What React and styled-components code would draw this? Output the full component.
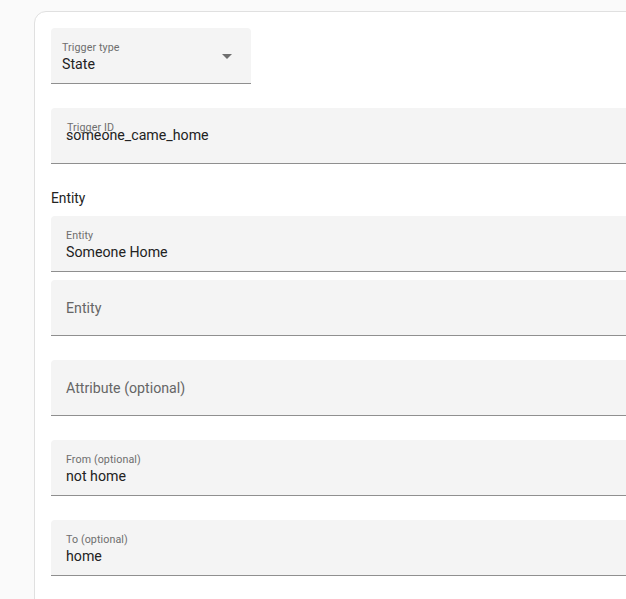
import React from 'react';
import styled, { createGlobalStyle } from 'styled-components';

const Global = createGlobalStyle`
  html, body {
    margin: 0;
    background: #fafafa;
    overflow: hidden;
    font-family: Roboto, "Noto Sans", sans-serif;
  }
`;

const Page = styled.div`
  padding: 11px 0 0 34px;
`;

const Card = styled.div`
  width: 700px;
  min-height: 620px;
  box-sizing: border-box;
  background: #fff;
  border: 1px solid #e0e0e0;
  border-radius: 12px;
  padding: 16px;
  display: flex;
  flex-direction: column;
`;

const Field = styled.div`
  position: relative;
  box-sizing: border-box;
  width: ${p => (p.$narrow ? '200px' : '100%')};
  height: 56px;
  margin-top: ${p => p.$gap ?? 0}px;
  padding: 13px ${p => (p.$narrow ? 11 : 15)}px 0;
  background: #f4f4f4;
  border-bottom: 1px solid #8f8f8f;
  border-radius: 4px 4px 0 0;
  display: flex;
  flex-direction: column;
`;

const Floating = styled.span`
  font-size: 10.7px;
  line-height: 14px;
  color: #6e6e6e;
  letter-spacing: 0.1px;
`;

const Overlay = styled(Floating)`
  position: absolute;
  left: 16px;
  top: 13px;
`;

const Value = styled.span`
  font-size: 14.2px;
  line-height: 18px;
  color: #222;
  padding-top: ${p => p.$offset ?? 0}px;
`;

const Placeholder = styled.span`
  font-size: 14.2px;
  line-height: 20px;
  color: #666;
  padding-top: 5px;
`;

const Arrow = styled.span`
  position: absolute;
  right: 19px;
  top: 26px;
  width: 0;
  height: 0;
  border-left: 5px solid transparent;
  border-right: 5px solid transparent;
  border-top: 5px solid #6f6f6f;
`;

const Section = styled.div`
  margin: 24px 0 8px;
  font-size: 13.8px;
  line-height: 20px;
  color: #222;
`;

export default function App() {
  return (
    <>
      <Global />
      <Page>
        <Card>
          <Field $narrow>
            <Floating>Trigger type</Floating>
            <Value>State</Value>
            <Arrow />
          </Field>

          <Field $gap={24}>
            <Overlay>Trigger ID</Overlay>
            <Value $offset={5}>someone_came_home</Value>
          </Field>

          <Section>Entity</Section>

          <Field>
            <Floating>Entity</Floating>
            <Value>Someone Home</Value>
          </Field>

          <Field $gap={8}>
            <Placeholder>Entity</Placeholder>
          </Field>

          <Field $gap={24}>
            <Placeholder>Attribute (optional)</Placeholder>
          </Field>

          <Field $gap={24}>
            <Floating>From (optional)</Floating>
            <Value>not home</Value>
          </Field>

          <Field $gap={24}>
            <Floating>To (optional)</Floating>
            <Value>home</Value>
          </Field>
        </Card>
      </Page>
    </>
  );
}
